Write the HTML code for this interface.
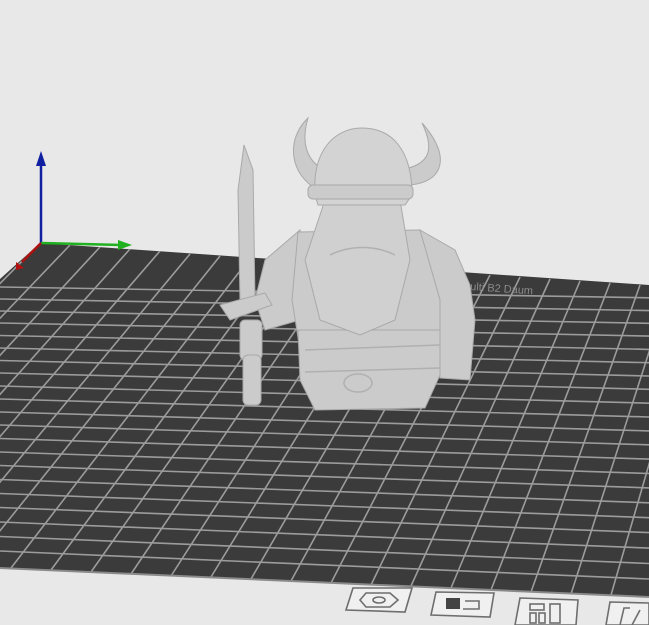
<!DOCTYPE html>
<html><head><style>
html,body{margin:0;padding:0;background:#e8e8e8;width:649px;height:625px;overflow:hidden}
svg{display:block}
</style></head><body>
<svg width="649" height="625" viewBox="0 0 649 625" xmlns="http://www.w3.org/2000/svg">
<defs>
<clipPath id="plate"><polygon points="40,243 649,285 649,597 0,568 0,279"/></clipPath>
</defs>
<rect width="649" height="625" fill="#e8e8e8"/>
<polygon points="40,243 649,285 649,597 0,568 0,279" fill="#3b3b3b"/>
<g clip-path="url(#plate)" stroke="#9c9c9c" stroke-width="1.6" fill="none">
<line x1="40" y1="243" x2="-269" y2="556"/>
<line x1="70" y1="245" x2="-229" y2="558"/>
<line x1="100" y1="247" x2="-189" y2="560"/>
<line x1="130" y1="249" x2="-149" y2="561"/>
<line x1="160" y1="251" x2="-109" y2="563"/>
<line x1="190" y1="254" x2="-69" y2="565"/>
<line x1="220" y1="256" x2="-29" y2="567"/>
<line x1="250" y1="258" x2="11" y2="568"/>
<line x1="280" y1="260" x2="51" y2="570"/>
<line x1="310" y1="262" x2="91" y2="572"/>
<line x1="340" y1="264" x2="131" y2="574"/>
<line x1="370" y1="266" x2="171" y2="576"/>
<line x1="400" y1="268" x2="211" y2="577"/>
<line x1="430" y1="270" x2="251" y2="579"/>
<line x1="460" y1="272" x2="291" y2="581"/>
<line x1="490" y1="275" x2="331" y2="583"/>
<line x1="520" y1="277" x2="371" y2="585"/>
<line x1="550" y1="279" x2="411" y2="586"/>
<line x1="580" y1="281" x2="451" y2="588"/>
<line x1="610" y1="283" x2="491" y2="590"/>
<line x1="640" y1="285" x2="531" y2="592"/>
<line x1="670" y1="287" x2="571" y2="594"/>
<line x1="700" y1="289" x2="611" y2="595"/>
<line x1="730" y1="291" x2="651" y2="597"/>
<line x1="760" y1="293" x2="691" y2="599"/>
<line x1="0" y1="287" x2="649" y2="297.8"/>
<line x1="0" y1="299" x2="649" y2="310.6"/>
<line x1="0" y1="311" x2="649" y2="323.3"/>
<line x1="0" y1="323" x2="649" y2="336.1"/>
<line x1="0" y1="335.5" x2="649" y2="349.4"/>
<line x1="0" y1="348" x2="649" y2="362.7"/>
<line x1="0" y1="360.5" x2="649" y2="376"/>
<line x1="0" y1="373" x2="649" y2="389.3"/>
<line x1="0" y1="386" x2="649" y2="403.2"/>
<line x1="0" y1="399" x2="649" y2="417"/>
<line x1="0" y1="412" x2="649" y2="430.9"/>
<line x1="0" y1="425" x2="649" y2="444.8"/>
<line x1="0" y1="438.5" x2="649" y2="459.1"/>
<line x1="0" y1="452" x2="649" y2="473.5"/>
<line x1="0" y1="465.5" x2="649" y2="487.9"/>
<line x1="0" y1="479.5" x2="649" y2="502.8"/>
<line x1="0" y1="493.5" x2="649" y2="517.7"/>
<line x1="0" y1="507.5" x2="649" y2="532.6"/>
<line x1="0" y1="522" x2="649" y2="548.1"/>
<line x1="0" y1="536.5" x2="649" y2="563.5"/>
<line x1="0" y1="551" x2="649" y2="579"/>
</g>
<line x1="0" y1="568" x2="649" y2="597" stroke="#8a8a8a" stroke-width="2"/>
<!-- axes -->
<line x1="41" y1="243" x2="41" y2="160" stroke="#1020a0" stroke-width="2.5"/>
<polygon points="36,166 46,166 41,151" fill="#1020a0"/>
<line x1="41" y1="243" x2="122" y2="245" stroke="#20b020" stroke-width="2.5"/>
<polygon points="118,240 118,250 132,245" fill="#20b020"/>
<line x1="41" y1="243" x2="22" y2="262" stroke="#b01010" stroke-width="2.5"/>
<polygon points="16,262 24,268 16,270" fill="#b01010"/>
<!-- figure -->
<g fill="#cbcbcb" stroke="#a9a9a9" stroke-width="1">
<!-- horns -->
<path d="M318,190 C290,175 285,140 308,118 C300,145 308,165 330,172 Z"/>
<path d="M405,185 C440,185 455,160 422,123 C435,150 430,165 400,170 Z"/>
<!-- arms/shoulders -->
<path d="M300,230 L265,260 L255,300 L265,330 L300,320 Z"/>
<path d="M420,230 L455,250 L470,285 L475,320 L470,380 L440,378 L430,300 Z"/>
<!-- torso -->
<path d="M298,232 L420,230 L440,300 L440,345 L300,350 L292,300 Z"/>
<!-- belt & base -->
<path d="M298,330 L440,330 L440,375 L425,408 L315,410 L300,380 Z"/>
<!-- beard/face -->
<path d="M325,200 L400,200 L410,260 L395,320 L360,335 L320,320 L305,260 Z" fill="#d0d0d0"/>
<!-- helmet -->
<path d="M315,195 C312,150 335,128 362,128 C392,128 412,150 412,195 L405,205 L318,205 Z" fill="#d3d3d3"/>
<rect x="308" y="185" width="105" height="14" rx="5"/>
<!-- sword -->
<path d="M244,145 L253,170 L255,300 L240,302 L238,190 Z"/>
<path d="M220,305 L265,293 L272,305 L230,320 Z"/>
<rect x="240" y="320" width="22" height="40" rx="5"/>
<rect x="243" y="355" width="18" height="50" rx="5"/>
</g>
<g fill="none" stroke="#b0b0b0" stroke-width="1.5">
<path d="M305,350 L440,345"/><path d="M305,372 L440,368"/>
<ellipse cx="358" cy="383" rx="14" ry="9"/>
<path d="M330,255 C350,245 375,245 395,255"/>
</g>
<text x="470" y="290" font-family="Liberation Sans, sans-serif" font-size="11" fill="#8c8c8c" transform="rotate(4 470 290)">ulti B2 Daum</text>
<!-- bottom toolbar -->
<g fill="#f0f0f0" stroke="#6e6e6e" stroke-width="1.6">
<path d="M353,588 L412,588 L405,612 L346,610 Z"/>
<path d="M436,592 L494,593 L490,617 L431,615 Z"/>
<path d="M520,598 L578,600 L576,625 L515,625 Z"/>
<path d="M610,602 L649,603 L649,625 L606,625 Z"/>
</g>
<g fill="none" stroke="#6e6e6e" stroke-width="1.6">
<polygon points="366,593 390,593 398,600 390,607 366,607 360,600"/>
<ellipse cx="379" cy="600" rx="6" ry="3"/>
<path d="M465,601 L479,601 L479,609 L463,609"/>
<rect x="530" y="604" width="14" height="6"/>
<rect x="530" y="613" width="6" height="10"/>
<rect x="539" y="613" width="6" height="10"/>
<rect x="550" y="604" width="10" height="19"/>
<path d="M620,625 L624,608 L630,608"/><path d="M632,625 L640,610"/>
</g>
<rect x="446" y="598" width="14" height="11" fill="#444"/>
</svg>
</body></html>
